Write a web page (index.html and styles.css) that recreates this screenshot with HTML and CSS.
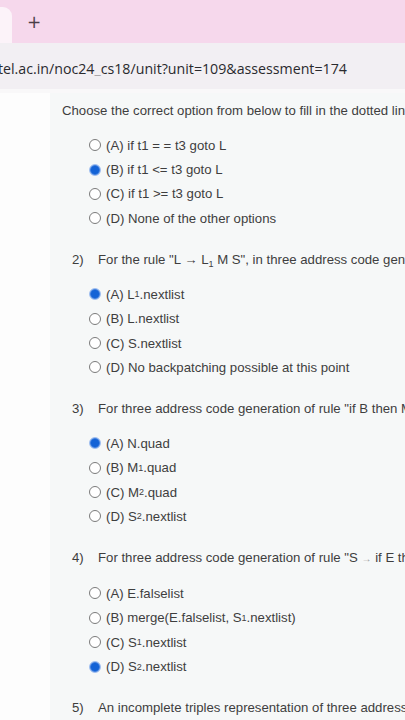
FILE: index.html
```html
<!DOCTYPE html>
<html lang="en">
<head>
    <meta charset="UTF-8">
    <meta name="viewport" content="width=device-width, initial-scale=1.0">
    <title>Assessment</title>
    <link rel="stylesheet" href="styles.css">
</head>
<body>

<div class="tabbar">
    <div class="tab"></div>
    <span class="newtab">+</span>
</div>
<div class="addressbar">
    <span class="url">tel.ac.in/noc24<span class="faint">_</span>cs18/unit?unit=109&amp;assessment=174</span>
</div>

<div class="page">
    <div class="sidebar"></div>
    <div class="panel">
        <p class="intro">Choose the correct option from below to fill in the dotted line</p>
        <ul class="options first">
            <li><span class="radio"></span>(A) if t1 = = t3 goto L</li>
            <li><span class="radio checked"></span>(B) if t1 &lt;= t3 goto L</li>
            <li><span class="radio"></span>(C) if t1 &gt;= t3 goto L</li>
            <li><span class="radio"></span>(D) None of the other options</li>
        </ul>

        <div class="question">
            <span class="num">2)</span>
            <span class="qtext">For the rule "L → L<sub>1</sub> M S", in three address code generation</span>
        </div>
        <ul class="options">
            <li><span class="radio checked"></span>(A) L<sub>1</sub>.nextlist</li>
            <li><span class="radio"></span>(B) L.nextlist</li>
            <li><span class="radio"></span>(C) S.nextlist</li>
            <li><span class="radio"></span>(D) No backpatching possible at this point</li>
        </ul>

        <div class="question">
            <span class="num">3)</span>
            <span class="qtext">For three address code generation of rule "if B then M</span>
        </div>
        <ul class="options">
            <li><span class="radio checked"></span>(A) N.quad</li>
            <li><span class="radio"></span>(B) M<sub>1</sub>.quad</li>
            <li><span class="radio"></span>(C) M<sub>2</sub>.quad</li>
            <li><span class="radio"></span>(D) S<sub>2</sub>.nextlist</li>
        </ul>

        <div class="question">
            <span class="num">4)</span>
            <span class="qtext">For three address code generation of rule "S <span class="arrow">→</span> if E then</span>
        </div>
        <ul class="options">
            <li><span class="radio"></span>(A) E.falselist</li>
            <li><span class="radio"></span>(B) merge(E.falselist, S<sub>1</sub>.nextlist)</li>
            <li><span class="radio"></span>(C) S<sub>1</sub>.nextlist</li>
            <li><span class="radio checked"></span>(D) S<sub>2</sub>.nextlist</li>
        </ul>

        <div class="question">
            <span class="num">5)</span>
            <span class="qtext">An incomplete triples representation of three address code</span>
        </div>
    </div>
</div>

</body>
</html>
```

FILE: styles.css
```css
body {
    margin: 0;
    width: 405px;
    height: 720px;
    overflow: hidden;
    background-color: #fdfdfd;
    font-family: "Liberation Sans", Arial, sans-serif;
    color: #3e3e3e;
}
.tabbar {
    height: 43px;
    background-color: #f6d8ec;
    display: flex;
    align-items: flex-end;
}
.tab {
    width: 12px;
    height: 36px;
    background-color: #fcf3f9;
    border-top-right-radius: 9px;
}
.newtab {
    align-self: center;
    margin-left: 15px;
    font-family: "DejaVu Sans", sans-serif;
    font-size: 17px;
    color: #4a3f48;
}
.addressbar {
    height: 46px;
    background-color: #f2eff3;
    border-bottom: 4px solid #f9f8f9;
    display: flex;
    align-items: center;
    overflow: hidden;
}
.url {
    margin: 4px 0 0 -2px;
    font-family: "Open Sans", sans-serif;
    font-size: 14.2px;
    color: #2a2a2e;
    white-space: nowrap;
}
.faint {
    color: #a9a6aa;
}
.page {
    display: flex;
    height: 631px;
}
.sidebar {
    width: 50px;
    background-color: #fdfdfd;
}
.panel {
    flex: 1;
    background-color: #f6f8f8;
    padding: 8px 0 0 12px;
    white-space: nowrap;
    overflow: hidden;
    font-size: 13.2px;
}
.intro {
    margin: 0;
    line-height: 20px;
}
.options {
    list-style: none;
    margin: 12px 0 0;
    padding: 0 0 0 27px;
}
.options li {
    height: 24.4px;
    display: flex;
    align-items: center;
}
.options sub, .qtext sub {
    font-size: 9px;
    vertical-align: -3px;
    line-height: 0;
}
.radio {
    width: 10px;
    height: 10px;
    border: 1px solid #7b7b7b;
    border-radius: 50%;
    background-color: #fff;
    margin-right: 5px;
    flex-shrink: 0;
}
.radio.checked {
    border-color: #9dbdf0;
    background: radial-gradient(circle, #1463d6 50%, #4a86e0 68%, #c9daf6 100%);
}
.question {
    margin-top: 19.5px;
    line-height: 20px;
    display: flex;
    padding-left: 10px;
}
.num {
    width: 26px;
    flex-shrink: 0;
}
.arrow {
    color: #9a9a9a;
    font-size: 10px;
}
```
